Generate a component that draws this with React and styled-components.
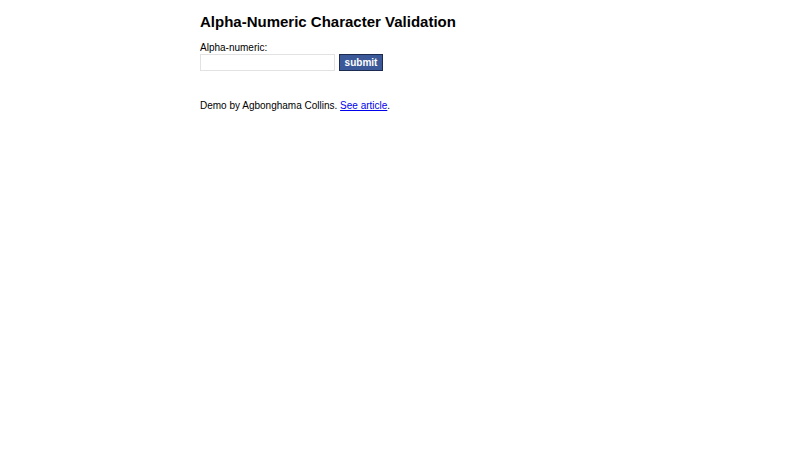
import React from 'react';
import styled, { createGlobalStyle } from 'styled-components';

var GlobalStyle = createGlobalStyle`
    html, body {
        margin: 0;
        padding: 0;
        background: #ffffff;
    }
    body {
        font-family: "Liberation Sans", Arial, sans-serif;
        color: #000000;
    }
`;

var Page = styled.div`
    width: 400px;
    margin: 0 auto;
    padding-top: 13px;
`;

var Title = styled.h2`
    margin: 0 0 12px;
    font-size: 15px;
    line-height: 17px;
    font-weight: bold;
`;

var Form = styled.form`
    display: flex;
    flex-direction: column;
    align-items: flex-start;
`;

var Label = styled.label`
    font-size: 10px;
    line-height: 12px;
    margin-bottom: 0;
`;

var Row = styled.div`
    display: flex;
    align-items: stretch;
    gap: 4px;
`;

var Input = styled.input`
    box-sizing: border-box;
    width: 135px;
    height: 17px;
    margin: 0;
    padding: 1px 3px;
    border: 1px solid #e2e2e2;
    font-size: 10px;
    font-family: inherit;
    outline: none;
`;

var Button = styled.button`
    box-sizing: border-box;
    width: 44px;
    height: 17px;
    margin: 0;
    padding: 0;
    background: #3b5998;
    border: 1px solid #1c2c50;
    color: #ffffff;
    font-family: inherit;
    font-size: 10px;
    font-weight: bold;
    line-height: 15px;
    cursor: pointer;
`;

var Footer = styled.p`
    margin: 29px 0 0;
    font-size: 10px;
    line-height: 12px;

    a {
        color: #0000ee;
    }
`;

export default function App() {
    return (
        <Page>
            <GlobalStyle />
            <Title>Alpha-Numeric Character Validation</Title>
            <Form onSubmit={(e) => e.preventDefault()}>
                <Label htmlFor="alnum">Alpha-numeric:</Label>
                <Row>
                    <Input type="text" id="alnum" name="alnum" />
                    <Button type="submit">submit</Button>
                </Row>
            </Form>
            <Footer>
                Demo by Agbonghama Collins. <a href="#">See article</a>.
            </Footer>
        </Page>
    );
}
